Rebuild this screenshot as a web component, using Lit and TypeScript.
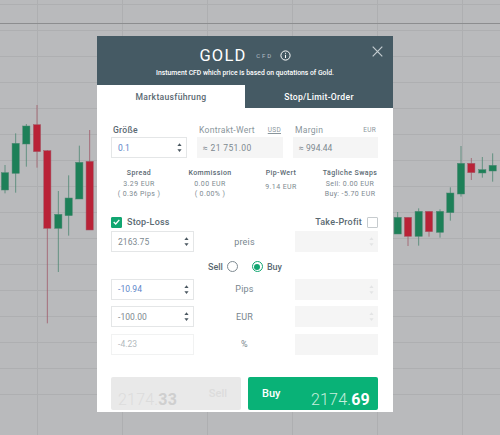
import { LitElement, html, css, svg } from "lit";
import { customElement } from "lit/decorators.js";

type C = [number, number, number, number, number, "g" | "r"];
const left: C[] = [
  [15, 495, 580, 518, 570, "g"], [47, 400, 578, 430, 520, "g"], [79, 372, 500, 378, 432, "g"],
  [111, 315, 503, 374, 455, "r"], [142, 450, 970, 452, 685, "r"], [175, 573, 816, 643, 685, "g"],
  [206, 526, 707, 594, 647, "g"], [238, 437, 597, 487, 597, "g"], [269, 390, 690, 484, 690, "r"],
];
const right: C[] = [
  [23, 636, 702, 652, 702, "g"], [54, 652, 738, 652, 709, "r"], [86, 625, 737, 634, 709, "g"],
  [117, 634, 710, 634, 695, "r"], [150, 628, 713, 634, 697, "g"], [181, 562, 662, 579, 638, "g"],
  [213, 438, 590, 490, 582, "g"], [244, 474, 540, 490, 518, "r"], [277, 471, 533, 509, 519, "g"],
  [308, 460, 545, 496, 513, "g"],
];

const candle = (c: C, ox: number) => {
  const x = ox + c[0] / 3;
  const col = c[5] === "g" ? "#1d8058" : "#b92237";
  const wick = c[5] === "g" ? "#4d8672" : "#a05a68";
  return svg`<line x1=${x} x2=${x} y1=${c[1] / 3} y2=${c[2] / 3} stroke=${wick} stroke-width="0.8"></line>
    <rect x=${x - 3.6} y=${c[3] / 3} width="7.2" height=${(c[4] - c[3]) / 3} fill=${col} stroke=${wick} stroke-width="0.5"></rect>`;
};

const stepper = (dim = false) => html`<svg class="step ${dim ? "dim" : ""}" viewBox="0 0 5 11" width="5" height="11">
  <path d="M2.5 1.2 4.6 4H.4z"></path><path d="M2.5 10 .4 7.2h4.2z"></path></svg>`;

@customElement("app-root")
export class AppRoot extends LitElement {
  static styles = css`
    :host { display: block; width: 500px; height: 435px; position: relative; overflow: hidden; background: #b9babc; font-family: Roboto, "Liberation Sans", sans-serif; color: #4a5a65; }
    .chart { position: absolute; inset: 0; }
    .modal { position: absolute; left: 97px; top: 36px; width: 296px; height: 376px; background: #fff; display: flex; flex-direction: column; }
    .head { height: 49px; background: #455a64; color: #fff; display: flex; flex-direction: column; align-items: center; position: relative; flex: none; }
    .title { display: flex; align-items: center; height: 31px; margin-top: 4px; }
    .title b { font-weight: 400; font-size: 16.5px; letter-spacing: 1.2px; margin-right: 9.8px; }
    .title span { font-size: 6px; letter-spacing: 1.8px; color: #b4bec4; margin-right: 6.7px; }
    .sub { font-size: 6.8px; font-weight: 500; margin-top: -2px; white-space: nowrap; }
    .close { position: absolute; right: 10px; top: 10px; }
    .tabs { display: flex; height: 23px; background: #455a64; flex: none; }
    .tab { display: flex; align-items: center; justify-content: center; font-size: 8.6px; font-weight: 500; letter-spacing: .3px; }
    .tab.on { width: 148px; background: #fff; color: #5a6972; }
    .tab.off { flex: 1; color: #fff; }
    .body { padding: 0 15px 0 14px; display: flex; flex-direction: column; flex: 1; }
    .fields { display: grid; grid-template-columns: 76px 86px 85px; column-gap: 10px; margin-top: 15px; }
    .lab { font-size: 8.6px; height: 14px; display: flex; justify-content: space-between; align-items: center; color: #8a969c; letter-spacing: .25px; padding: 0 2px; }
    .lab.strong { font-weight: 500; color: #5a6972; }
    .lab small { font-size: 6.5px; letter-spacing: .3px; }
    .lab small.u { text-decoration: underline; }
    .inp { height: 21px; box-sizing: border-box; background: #f5f5f5; display: flex; align-items: center; justify-content: space-between; padding: 0 4px 0 6px; font-size: 8.5px; color: #7d8990; letter-spacing: .05px; }
    .inp.box { background: #fff; border: 1px solid #e4e6e7; }
    .inp.blue { color: #5e86c9; }
    .inp.faint { color: #b3babe; border-color: #f1f2f2; }
    .inp.approx { letter-spacing: .35px; }
    .step { fill: #4a5760; flex: none; }
    .step.dim { fill: #e3e4e5; }
    .info { display: grid; grid-template-columns: 56px 86px 56px 82px; margin-top: 10px; text-align: center; font-size: 7px; line-height: 10.7px; color: #7d8990; letter-spacing: .4px; white-space: nowrap; }
    .info b { display: block; font-weight: 500; color: #5a6972; }
    .info .mid b { margin-bottom: 3px; }
    .checks { display: flex; justify-content: space-between; align-items: center; margin-top: 15px; height: 14px; font-size: 9px; font-weight: 500; color: #5a6972; letter-spacing: .2px; }
    .check { display: flex; align-items: center; gap: 5px; }
    .cb { width: 9px; height: 9px; border: 1px solid #c6cbce; border-radius: 1px; display: block; }
    .cb.on { background: #11a671; border-color: #11a671; display: flex; align-items: center; justify-content: center; }
    .row { display: grid; grid-template-columns: 83px 1fr 83px; align-items: center; margin-top: 6.5px; }
    .row.first { margin-top: 2px; }
    .row .c { text-align: center; font-size: 9px; color: #78868e; letter-spacing: .2px; }
    .sides { display: flex; justify-content: center; align-items: center; gap: 14px; font-size: 9px; font-weight: 500; color: #5a6972; height: 14px; margin-top: 7.5px; margin-bottom: -1.5px; padding-left: 1px; }
    .side { display: flex; align-items: center; gap: 4px; }
    .radio { width: 9px; height: 9px; border: 1px solid #7f8b92; border-radius: 50%; display: block; }
    .radio.on { border-color: #11a671; display: flex; align-items: center; justify-content: center; }
    .radio.on::after { content: ""; width: 6px; height: 6px; border-radius: 50%; background: #11a671; }
    .btns { display: grid; grid-template-columns: 130px 130px; column-gap: 7px; margin-top: 22px; }
    .btn { height: 33px; border-radius: 2px; display: flex; justify-content: space-between; box-sizing: border-box; }
    .sell { background: #e9e9e9; color: #dcdcdc; padding: 0 14px 0 7px; }
    .buy { background: #09b277; color: #fff; padding: 0 8px 0 14px; }
    .btn .l { font-size: 11px; font-weight: 500; margin-top: 10px; }
    .btn .p { font-size: 16px; font-weight: 300; margin-top: 13px; letter-spacing: .2px; }
    .btn .p b { font-weight: 700; }
    .sell .p b { color: #cfcfcf; }
    .buy .p { color: #c6eedd; }
    .buy .p b { color: #fff; }
  `;

  render() {
    const hs = Array.from({ length: 16 }, (_, i) => 4.5 + i * 26);
    const vs = [37, 122, 207, 292, 377, 462];
    return html`
      <svg class="chart" width="500" height="435" viewBox="0 0 500 435">
        ${hs.map((y) => svg`<line x1="0" x2="500" y1=${y} y2=${y} stroke="#aeafb1" stroke-width="1"></line>`)}
        ${vs.map((x) => svg`<line x1=${x + 0.5} x2=${x + 0.5} y1="0" y2="435" stroke="#aeafb1" stroke-width="1"></line>`)}
        <line x1="0" x2="500" y1="23.5" y2="23.5" stroke="#8c8d8f" stroke-width="1"></line>
        ${left.map((c) => candle(c, 0))}
        ${right.map((c) => candle(c, 390))}
      </svg>
      <div class="modal">
        <div class="head">
          <div class="title"><b>GOLD</b><span>CFD</span>
            <svg width="11" height="11" viewBox="0 0 11 11" fill="none" stroke="#fff"><circle cx="5.5" cy="5.5" r="4.6"></circle><path d="M5.5 4.8v3.2M5.5 2.8v1"></path></svg>
          </div>
          <div class="sub">Instument CFD which price is based on quotations of Gold.</div>
          <svg class="close" width="11" height="11" viewBox="0 0 11 11" stroke="#c4ccd0" stroke-width="1.2"><path d="M.7.7l9.6 9.6M10.3.7.7 10.3"></path></svg>
        </div>
        <div class="tabs"><div class="tab on">Marktausführung</div><div class="tab off">Stop/Limit-Order</div></div>
        <div class="body">
          <div class="fields">
            <div><div class="lab strong">Größe</div><div class="inp box blue">0.1 ${stepper()}</div></div>
            <div><div class="lab">Kontrakt-Wert <small class="u">USD</small></div><div class="inp approx">≈ 21 751.00</div></div>
            <div><div class="lab">Margin <small>EUR</small></div><div class="inp">≈ 994.44</div></div>
          </div>
          <div class="info">
            <div><b>Spread</b>3.29 EUR<br />( 0.36 Pips )</div>
            <div><b>Kommission</b>0.00 EUR<br />( 0.00% )</div>
            <div class="mid"><b>Pip-Wert</b>9.14 EUR</div>
            <div><b>Tägliche Swaps</b>Sell: 0.00 EUR<br />Buy: -5.70 EUR</div>
          </div>
          <div class="checks">
            <div class="check"><span class="cb on"><svg width="7" height="6" viewBox="0 0 7 6" fill="none" stroke="#fff" stroke-width="1.3"><path d="M.7 3l2 2L6.3.8"></path></svg></span>Stop-Loss</div>
            <div class="check">Take-Profit <span class="cb"></span></div>
          </div>
          <div class="row first"><div class="inp box">2163.75 ${stepper()}</div><div class="c">preis</div><div class="inp"><span></span>${stepper(true)}</div></div>
          <div class="sides"><div class="side">Sell <span class="radio"></span></div><div class="side"><span class="radio on"></span> Buy</div></div>
          <div class="row"><div class="inp box blue">-10.94 ${stepper()}</div><div class="c">Pips</div><div class="inp"><span></span>${stepper(true)}</div></div>
          <div class="row"><div class="inp box">-100.00 ${stepper()}</div><div class="c">EUR</div><div class="inp"><span></span>${stepper(true)}</div></div>
          <div class="row"><div class="inp box faint">-4.23</div><div class="c">%</div><div class="inp"></div></div>
          <div class="btns">
            <div class="btn sell"><span class="p">2174.<b>33</b></span><span class="l">Sell</span></div>
            <div class="btn buy"><span class="l">Buy</span><span class="p">2174.<b>69</b></span></div>
          </div>
        </div>
      </div>
    `;
  }
}
